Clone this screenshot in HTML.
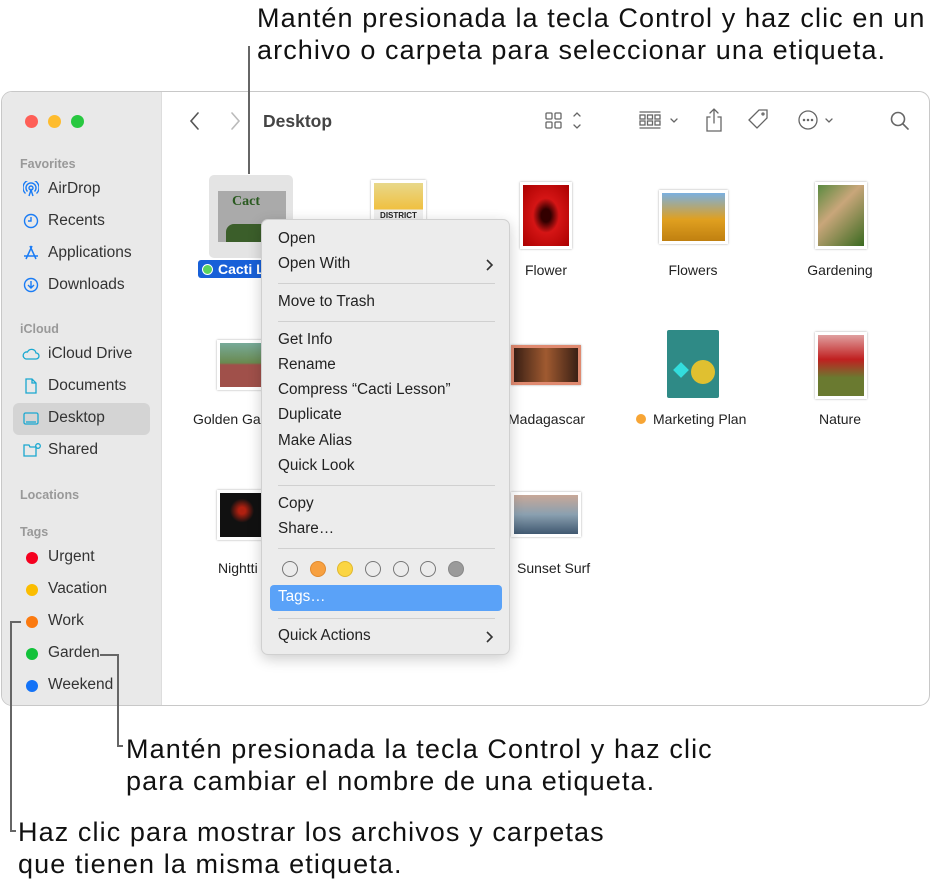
<!DOCTYPE html>
<html><head><meta charset="utf-8"><style>
*{box-sizing:border-box;margin:0;padding:0}
body{width:931px;height:883px;background:#fff;font-family:"Liberation Sans",sans-serif;position:relative;overflow:hidden;color:#222}
.ab{position:absolute}
.cap{position:absolute;font-size:27px;letter-spacing:1.1px;line-height:32px;color:#111;white-space:nowrap}
.win{position:absolute;left:1px;top:91px;width:929px;height:615px;border:1px solid #c8c8c8;border-radius:11px;overflow:hidden;background:#fff}
.side{position:absolute;left:0;top:0;width:160px;height:100%;background:#e9e9e9;border-right:1px solid #ddd}
.sh{position:absolute;left:18px;font-size:12.5px;color:#999;font-weight:bold}
.si{position:absolute;left:46px;font-size:15.5px;color:#333}
.ic{position:absolute;left:21px;width:16px;height:16px}
.dot{position:absolute;left:24px;width:12px;height:12px;border-radius:50%}
.lbl{position:absolute;font-size:14px;color:#222;text-align:center;width:130px}
.th{position:absolute;border:3px solid #fff;box-shadow:0 0 2px rgba(0,0,0,.35)}
.menu{position:absolute;left:259px;top:127px;width:249px;height:436px;background:#ececec;border:1px solid #d0d0d0;border-radius:7px;box-shadow:0 4px 14px rgba(0,0,0,.2)}
.mi{position:absolute;left:16px;font-size:15.3px;color:#222}
.sep{position:absolute;left:16px;width:217px;height:1px;background:#d0d0d0}
.line{position:absolute;background:#666}
.tc{position:absolute;top:341px;width:16px;height:16px;border-radius:50%;border:1.3px solid #777}
</style></head><body>
<div class="cap" style="left:257px;top:2px">Mantén presionada la tecla Control y haz clic en un<br>archivo o carpeta para seleccionar una etiqueta.</div>
<div class="win">
 <div class="side">
  <div class="ab" style="left:23px;top:23px;width:13px;height:13px;border-radius:50%;background:#fe5f57"></div>
  <div class="ab" style="left:46px;top:23px;width:13px;height:13px;border-radius:50%;background:#febc2e"></div>
  <div class="ab" style="left:69px;top:23px;width:13px;height:13px;border-radius:50%;background:#28c840"></div>
  <div class="sh" style="top:65px">Favorites</div>
  <svg class="ic" style="top:89px" viewBox="0 0 16 16" fill="none" stroke="#1a7cf5" stroke-width="1.4"><circle cx="8" cy="7" r="2"/><path d="M4.5 10.5a5 5 0 1 1 7 0M2.5 12.5a8 8 0 1 1 11 0M6 15l2-6 2 6"/></svg><div class="si" style="top:88px">AirDrop</div>
  <svg class="ic" style="top:121px" viewBox="0 0 16 16" fill="none" stroke="#1a7cf5" stroke-width="1.4"><circle cx="8" cy="8" r="6.5"/><path d="M8 4v4H5"/></svg><div class="si" style="top:120px">Recents</div>
  <svg class="ic" style="top:153px" viewBox="0 0 16 16" fill="none" stroke="#1a7cf5" stroke-width="1.5"><path d="M9 1L3 14M7 1l6 13M1 11h14"/></svg><div class="si" style="top:152px">Applications</div>
  <svg class="ic" style="top:185px" viewBox="0 0 16 16" fill="none" stroke="#1a7cf5" stroke-width="1.4"><circle cx="8" cy="8" r="6.5"/><path d="M8 4v7M5 8l3 3 3-3"/></svg><div class="si" style="top:184px">Downloads</div>
  <div class="sh" style="top:230px">iCloud</div>
  <svg class="ic" style="top:254px;width:18px;left:20px" viewBox="0 0 18 16" fill="none" stroke="#1aa8d0" stroke-width="1.3"><path d="M4 13h10a3 3 0 0 0 0-6 4.5 4.5 0 0 0-8.5-1A3.5 3.5 0 0 0 4 13z"/></svg><div class="si" style="top:253px">iCloud Drive</div>
  <svg class="ic" style="top:286px" viewBox="0 0 16 16" fill="none" stroke="#1aa8d0" stroke-width="1.3"><path d="M3 1h6l4 4v10H3zM9 1v4h4"/></svg><div class="si" style="top:285px">Documents</div>
  <div class="ab" style="left:11px;top:311px;width:137px;height:32px;border-radius:6px;background:#d4d4d4"></div>
  <svg class="ic" style="top:319px" viewBox="0 0 16 16" fill="none" stroke="#1aa8d0" stroke-width="1.3"><rect x="1" y="2" width="14" height="11" rx="1.5"/><path d="M3 11h10"/></svg><div class="si" style="top:317px">Desktop</div>
  <svg class="ic" style="top:350px;width:19px" viewBox="0 0 19 16" fill="none" stroke="#1aa8d0" stroke-width="1.3"><path d="M1 3h5l1 2h6v9H1z"/><circle cx="15" cy="4" r="2.3"/></svg><div class="si" style="top:349px">Shared</div>
  <div class="sh" style="top:396px">Locations</div>
  <div class="sh" style="top:433px">Tags</div>
  <div class="dot" style="top:460px;background:#f5001f"></div><div class="si" style="top:456px">Urgent</div>
  <div class="dot" style="top:492px;background:#fbbd00"></div><div class="si" style="top:488px">Vacation</div>
  <div class="dot" style="top:524px;background:#fb7a10"></div><div class="si" style="top:520px">Work</div>
  <div class="dot" style="top:556px;background:#12c23a"></div><div class="si" style="top:552px">Garden</div>
  <div class="dot" style="top:588px;background:#1473f7"></div><div class="si" style="top:584px">Weekend</div>
 </div>
 <svg class="ab" style="left:184px;top:19px" width="70" height="20" fill="none" stroke-width="1.6" stroke-linecap="round"><path d="M12 2l-7 8 7 8" stroke="#555"/><path d="M46 2l7 8-7 8" stroke="#bbb"/></svg>
 <div class="ab" style="left:261px;top:19px;font-size:17.5px;font-weight:bold;color:#444">Desktop</div>
 <svg class="ab" style="left:540px;top:16px" width="380" height="26" fill="none" stroke="#666" stroke-width="1.3" stroke-linecap="round">
  <rect x="4" y="5" width="6" height="6" rx="1"/><rect x="13" y="5" width="6" height="6" rx="1"/><rect x="4" y="14" width="6" height="6" rx="1"/><rect x="13" y="14" width="6" height="6" rx="1"/>
  <path d="M32 8l3-3 3 3M32 17l3 3 3-3"/>
  <path d="M98 4h20M98 20h20"/><rect x="98" y="7" width="5" height="4"/><rect x="105.5" y="7" width="5" height="4"/><rect x="113" y="7" width="5" height="4"/><rect x="98" y="13" width="5" height="4"/><rect x="105.5" y="13" width="5" height="4"/><rect x="113" y="13" width="5" height="4"/>
  <path d="M129 11l3 3 3-3"/>
  <path d="M172 1v14M168 5l4-4 4 4M168 9h-3v14h14V9h-3"/>
  <path d="M207 12l10-10h8v8l-10 10z"/><circle cx="221" cy="6" r="1"/>
  <circle cx="266" cy="12" r="9"/><circle cx="262" cy="12" r=".6"/><circle cx="266" cy="12" r=".6"/><circle cx="270" cy="12" r=".6"/>
  <path d="M284 11l3 3 3-3"/>
  <circle cx="356" cy="11" r="6.5" stroke-width="1.6"/><path d="M361 16l5 5" stroke-width="1.6"/>
 </svg>
 <div class="ab" style="left:207px;top:83px;width:84px;height:83px;background:#e4e4e4;border-radius:5px"></div>
 <div class="ab" style="left:216px;top:99px;width:68px;height:51px;background:#aaa"><div style="font:bold 14px 'Liberation Serif',serif;color:#2a5a20;padding:3px 0 0 14px">Cact</div><div style="position:absolute;left:8px;bottom:0;width:45px;height:18px;background:#3b5e2a;border-radius:8px 8px 0 0"></div></div>
 <div class="ab" style="left:196px;top:168px;width:70px;height:18px;background:#1860d8;border-radius:3px;color:#fff;font-size:14px;font-weight:bold;padding:1px 0 0 20px;overflow:hidden;white-space:nowrap">Cacti L</div>
 <div class="ab" style="left:200px;top:172px;width:11px;height:11px;border-radius:50%;background:#5ad35f;border:1px solid #fff"></div>
 <div class="th" style="left:369px;top:88px;width:55px;height:50px;background:linear-gradient(#e8d88a,#f0c040 60%,#eee 60%)"><div style="font:bold 8px sans-serif;text-align:center;margin-top:28px">DISTRICT</div></div>
 <div class="th" style="left:518px;top:90px;width:52px;height:67px;background:radial-gradient(#300 15%,#d51515 40%,#a00)"></div>
 <div class="th" style="left:657px;top:98px;width:69px;height:54px;background:linear-gradient(#7ab0e0,#e0a020 55%,#c08010)"></div>
 <div class="th" style="left:813px;top:90px;width:52px;height:67px;background:linear-gradient(135deg,#5a8a40,#c9a67a 40%,#3a6a20)"></div>
 <div class="lbl" style="left:479px;top:170px">Flower</div>
 <div class="lbl" style="left:626px;top:170px">Flowers</div>
 <div class="lbl" style="left:773px;top:170px">Gardening</div>
 <div class="th" style="left:215px;top:248px;width:50px;height:50px;background:linear-gradient(#7a9 0,#6a8a50 45%,#a0504a 50%)"></div>
 <div class="ab" style="left:191px;top:319px;font-size:14px">Golden Ga</div>
 <div class="th" style="left:509px;top:253px;width:70px;height:40px;border-color:#e08a70;background:linear-gradient(90deg,#3a2015,#a05a30,#3a2015)"></div>
 <div class="ab" style="left:506px;top:319px;font-size:14px">Madagascar</div>
 <div class="ab" style="left:665px;top:238px;width:52px;height:68px;background:#2f8a86;border-radius:2px"><div style="position:absolute;left:6px;top:32px;width:16px;height:16px;background:#3dd;transform:rotate(45deg) scale(.7)"></div><div style="position:absolute;left:24px;top:30px;width:24px;height:24px;border-radius:50%;background:#e0c030"></div></div>
 <div class="ab" style="left:634px;top:322px;width:10px;height:10px;border-radius:50%;background:#f7a535"></div>
 <div class="ab" style="left:651px;top:319px;font-size:14px">Marketing Plan</div>
 <div class="th" style="left:813px;top:240px;width:52px;height:67px;background:linear-gradient(#e0a0a0,#c02020 40%,#6a7a30 70%)"></div>
 <div class="lbl" style="left:773px;top:319px">Nature</div>
 <div class="th" style="left:215px;top:398px;width:50px;height:50px;background:radial-gradient(circle at 50% 40%,#b02010 10%,#111 35%)"></div>
 <div class="ab" style="left:216px;top:468px;font-size:14px">Nightti</div>
 <div class="th" style="left:509px;top:400px;width:70px;height:45px;background:linear-gradient(#c8a898,#8aa0b0 50%,#405870)"></div>
 <div class="ab" style="left:515px;top:468px;font-size:14px">Sunset Surf</div>
 <div class="menu">
  <div class="mi" style="top:10px">Open</div>
  <div class="mi" style="top:35px">Open With</div>
  <svg class="ab" style="left:222px;top:38px" width="10" height="14" fill="none" stroke="#333" stroke-width="1.6"><path d="M3 2l5 5-5 5"/></svg>
  <div class="sep" style="top:63px"></div>
  <div class="mi" style="top:73px">Move to Trash</div>
  <div class="sep" style="top:101px"></div>
  <div class="mi" style="top:111px">Get Info</div>
  <div class="mi" style="top:136px">Rename</div>
  <div class="mi" style="top:161px">Compress “Cacti Lesson”</div>
  <div class="mi" style="top:186px">Duplicate</div>
  <div class="mi" style="top:212px">Make Alias</div>
  <div class="mi" style="top:237px">Quick Look</div>
  <div class="sep" style="top:265px"></div>
  <div class="mi" style="top:275px">Copy</div>
  <div class="mi" style="top:300px">Share…</div>
  <div class="sep" style="top:328px"></div>
  <div class="tc" style="left:20px"></div>
  <div class="tc" style="left:48px;background:#f7a040;border-color:#e08a30"></div>
  <div class="tc" style="left:75px;background:#fbd542;border-color:#e0b830"></div>
  <div class="tc" style="left:103px"></div>
  <div class="tc" style="left:131px"></div>
  <div class="tc" style="left:158px"></div>
  <div class="tc" style="left:186px;background:#9a9a9a;border-color:#888"></div>
  <div class="ab" style="left:8px;top:365px;width:232px;height:26px;background:#5aa2f8;border-radius:4px;color:#fff;font-size:15.3px;padding:3px 0 0 8px">Tags…</div>
  <div class="sep" style="top:398px"></div>
  <div class="mi" style="top:407px">Quick Actions</div>
  <svg class="ab" style="left:222px;top:410px" width="10" height="14" fill="none" stroke="#333" stroke-width="1.6"><path d="M3 2l5 5-5 5"/></svg>
 </div>
</div>
<div class="line" style="left:248px;top:46px;width:2px;height:128px"></div>
<div class="line" style="left:100px;top:654px;width:19px;height:2px"></div>
<div class="line" style="left:117px;top:654px;width:2px;height:93px"></div>
<div class="line" style="left:117px;top:745px;width:6px;height:2px"></div>
<div class="line" style="left:10px;top:621px;width:11px;height:2px"></div>
<div class="line" style="left:10px;top:621px;width:2px;height:211px"></div>
<div class="line" style="left:10px;top:830px;width:6px;height:2px"></div>
<div class="cap" style="left:126px;top:733px">Mantén presionada la tecla Control y haz clic<br>para cambiar el nombre de una etiqueta.</div>
<div class="cap" style="left:18px;top:816px">Haz clic para mostrar los archivos y carpetas<br>que tienen la misma etiqueta.</div>
</body></html>
